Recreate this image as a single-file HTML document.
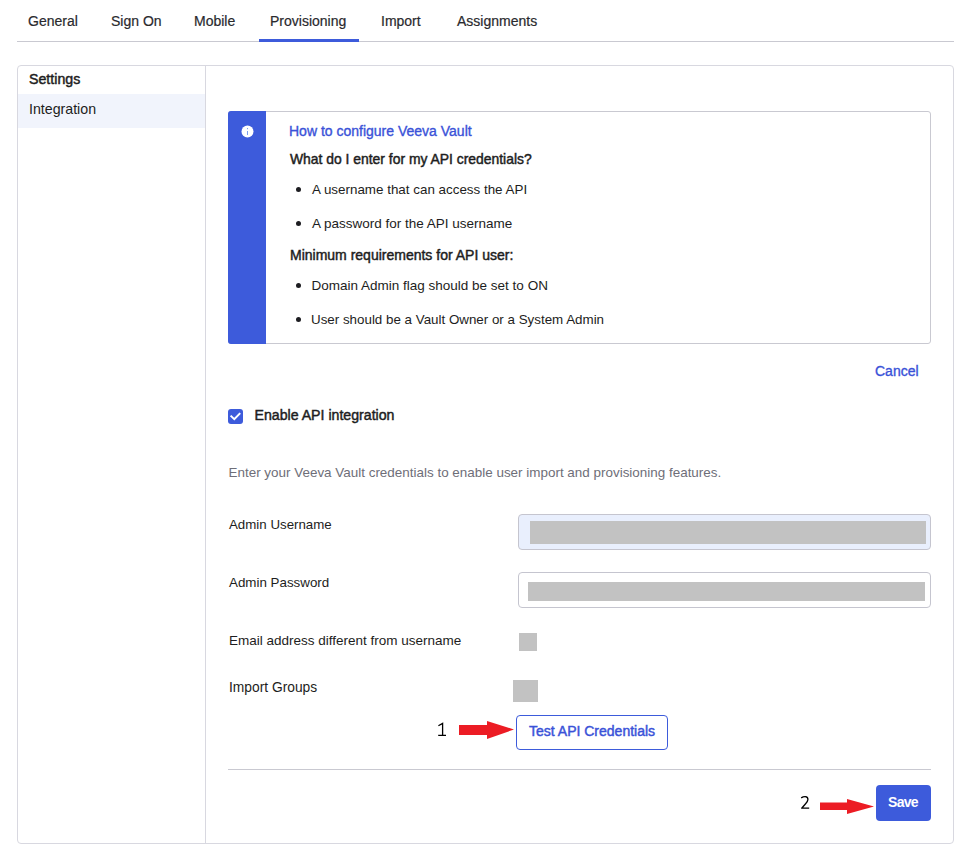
<!DOCTYPE html>
<html><head><meta charset="utf-8">
<style>
html,body{margin:0;padding:0;background:#fff;}
body{width:970px;height:850px;position:relative;overflow:hidden;font-family:"Liberation Sans",sans-serif;color:#1d1d21;}
.a{position:absolute;white-space:nowrap;line-height:1;}
.tab{font-size:14px;color:#2a2a2e;-webkit-text-stroke:0.2px currentColor;}
.box{position:absolute;box-sizing:border-box;}
.txt{font-size:13.5px;color:#1d1d21;}
.bold{font-weight:normal;-webkit-text-stroke:0.45px currentColor;}
.med{-webkit-text-stroke:0.35px currentColor;}
.bul{position:absolute;width:5px;height:5px;border-radius:50%;background:#1d1d21;}
.gray{position:absolute;background:#c2c2c2;}
.arrow{position:absolute;}
</style></head>
<body>
<!-- tabs -->
<div class="a tab" style="left:28px;top:14px;">General</div>
<div class="a tab" style="left:111px;top:14px;">Sign On</div>
<div class="a tab" style="left:194px;top:14px;">Mobile</div>
<div class="a tab" style="left:270px;top:14px;">Provisioning</div>
<div class="a tab" style="left:381px;top:14px;">Import</div>
<div class="a tab" style="left:457px;top:14px;">Assignments</div>
<div class="box" style="left:17px;top:41px;width:937px;height:1px;background:#c9c9d1;"></div>
<div class="box" style="left:259px;top:39px;width:100px;height:3px;background:#3d5bdb;"></div>

<!-- outer panel -->
<div class="box" style="left:17px;top:65px;width:937px;height:779px;border:1px solid #d8d8e0;border-radius:4px;"></div>
<div class="box" style="left:205px;top:66px;width:1px;height:777px;background:#d8d8e0;"></div>
<div class="box" style="left:18px;top:94px;width:187px;height:34px;background:#f1f4fc;"></div>
<div class="a txt bold" style="left:29px;top:72px;font-size:14.2px;">Settings</div>
<div class="a txt" style="left:29px;top:102px;font-size:14.2px;">Integration</div>

<!-- info box -->
<div class="box" style="left:228px;top:111px;width:703px;height:233px;border:1px solid #c9c9d1;border-radius:3px;"></div>
<div class="box" style="left:228px;top:111px;width:38px;height:233px;background:#3d5bdb;border-radius:3px 0 0 3px;"></div>
<svg class="box" style="left:241px;top:125px;" width="13" height="13" viewBox="0 0 13 13"><circle cx="6.5" cy="6.5" r="6" fill="#fff"/><rect x="6" y="6" width="1" height="4" fill="#7a9cf0"/><rect x="6" y="3" width="1" height="1.2" fill="#7a9cf0"/></svg>
<div class="a txt med" style="left:289px;top:124px;color:#3a52d8;font-size:14px;">How to configure Veeva Vault</div>
<div class="a txt bold" style="left:290px;top:153px;font-size:13.9px;">What do I enter for my API credentials?</div>
<div class="bul" style="left:296px;top:187px;"></div>
<div class="a txt" style="left:312px;top:183px;font-size:13.4px;">A username that can access the API</div>
<div class="bul" style="left:296px;top:221px;"></div>
<div class="a txt" style="left:312px;top:217px;">A password for the API username</div>
<div class="a txt bold" style="left:290px;top:248px;font-size:14px;">Minimum requirements for API user:</div>
<div class="bul" style="left:296px;top:283px;"></div>
<div class="a txt" style="left:311.5px;top:279px;">Domain Admin flag should be set to ON</div>
<div class="bul" style="left:296px;top:317px;"></div>
<div class="a txt" style="left:311px;top:313px;font-size:13.36px;">User should be a Vault Owner or a System Admin</div>

<div class="a txt med" style="left:875px;top:364px;color:#3a52d8;font-size:14px;">Cancel</div>

<!-- checkbox -->
<div class="box" style="left:228px;top:409px;width:15px;height:15px;background:#3d5bdb;border-radius:3px;"></div>
<svg class="box" style="left:228px;top:409px;" width="15" height="15" viewBox="0 0 15 15"><path d="M2.6 6.6 L6.3 10.2 L12.2 4.1" stroke="#fff" stroke-width="2" fill="none"/></svg>
<div class="a txt bold" style="left:254.5px;top:408px;font-size:14.15px;">Enable API integration</div>

<div class="a txt" style="left:228.5px;top:466px;color:#6e6e78;font-size:13.45px;">Enter your Veeva Vault credentials to enable user import and provisioning features.</div>

<div class="a txt" style="left:229px;top:518px;font-size:13.3px;">Admin Username</div>
<div class="box" style="left:518px;top:514px;width:413px;height:36px;border:1px solid #c5c5cf;border-radius:4px;background:#e9effd;"></div>
<div class="gray" style="left:530px;top:521px;width:396px;height:23px;"></div>

<div class="a txt" style="left:229px;top:576px;font-size:13.37px;">Admin Password</div>
<div class="box" style="left:518px;top:572px;width:413px;height:36px;border:1px solid #c5c5cf;border-radius:4px;background:#fff;"></div>
<div class="gray" style="left:528px;top:582px;width:397px;height:19px;"></div>

<div class="a txt" style="left:229px;top:634px;">Email address different from username</div>
<div class="gray" style="left:519px;top:633px;width:18px;height:18px;"></div>

<div class="a txt" style="left:229px;top:681px;font-size:13.8px;">Import Groups</div>
<div class="gray" style="left:513px;top:680px;width:25px;height:22px;"></div>

<!-- annotation 1 -->
<svg class="box" style="left:0;top:0;" width="970" height="850"><path d="M438.4 725.8 L442.6 723.4 V735.2 M438.2 735.3 H446" stroke="#000" stroke-width="1.3" fill="none"/><path d="M801.2 797.9 Q803.2 796.5 805.3 796.6 Q808.1 796.9 807.9 799.6 Q807.7 801.5 805.6 803.7 L801.7 808.2 H809.2" stroke="#000" stroke-width="1.3" fill="none" stroke-linejoin="round"/></svg>
<svg class="arrow" style="left:459px;top:721px;" width="56" height="18" viewBox="0 0 56 18"><path d="M0 4 H28 V0 L55 8.5 L28 18 V14 H0 Z" fill="#ec1c24"/></svg>
<div class="box" style="left:516px;top:715px;width:152px;height:35px;border:1px solid #3d5bdb;border-radius:4px;"></div>
<div class="a txt bold" style="left:529px;top:724px;color:#3a52d8;font-size:14px;">Test API Credentials</div>

<div class="box" style="left:228px;top:769px;width:703px;height:1px;background:#c9c9d1;"></div>

<!-- annotation 2 -->

<svg class="arrow" style="left:820px;top:799px;" width="55" height="15" viewBox="0 0 55 15"><path d="M0 3.5 H27 V0 L54 7.5 L27 15 V11 H0 Z" fill="#ec1c24"/></svg>
<div class="box" style="left:876px;top:785px;width:55px;height:36px;background:#3d5bdb;border-radius:4px;"></div>
<div class="a" style="left:888px;top:795px;font-size:14px;letter-spacing:-0.7px;font-weight:bold;color:#fff;">Save</div>
</body></html>
